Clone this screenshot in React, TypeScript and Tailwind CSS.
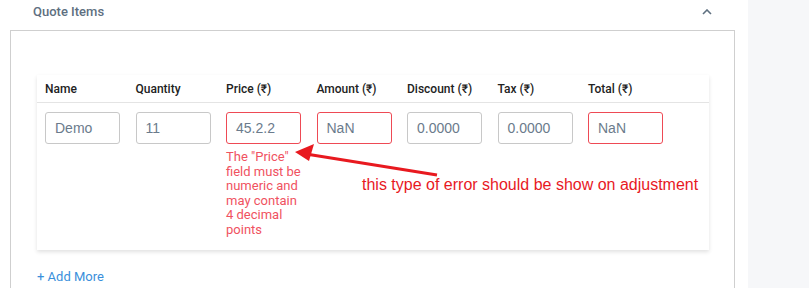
import React from 'react';

const columns = ['Name', 'Quantity', 'Price (₹)', 'Amount (₹)', 'Discount (₹)', 'Tax (₹)', 'Total (₹)'];

const values: { value: string; error?: boolean }[] = [
  { value: 'Demo' },
  { value: '11' },
  { value: '45.2.2', error: true },
  { value: 'NaN', error: true },
  { value: '0.0000' },
  { value: '0.0000' },
  { value: 'NaN', error: true },
];

const Field: React.FC<{ value: string; error?: boolean }> = ({ value, error }) => (
  <div
    className={`w-[75px] h-[32px] flex items-center pl-[9px] rounded-[3px] border text-[14px] text-[#6b7b8c] bg-white ${
      error ? 'border-[#ee4a55]' : 'border-[#c8c8c8]'
    }`}
    style={{ fontFamily: '"Liberation Sans", Arial, sans-serif' }}
  >
    {value}
  </div>
);

export default function App() {
  return (
    <div className="flex w-full h-[288px] overflow-hidden bg-white" style={{ fontFamily: 'Roboto, "Noto Sans", sans-serif' }}>
      <div className="w-[748px] shrink-0 pl-[10px] pr-[13px] relative">
        <div className="h-[30px] flex items-start justify-between pt-[4px] pl-[23px] pr-[23px]">
          <span className="text-[13px] leading-[16px] font-medium text-[#5e6f80]">Quote Items</span>
          <svg width="10" height="6" viewBox="0 0 10 6" className="text-[#5f7080] mt-[5px]">
            <path d="M1 5 L5 1 L9 5" fill="none" stroke="currentColor" strokeWidth="1.6" />
          </svg>
        </div>

        <div className="border border-[#cfcfcf] pt-[44px] pl-[26px] pr-[25px] h-[300px]">
          <div className="bg-white shadow-[0_2px_4px_rgba(0,0,0,0.12)] pb-[12px]">
            <div className="grid grid-cols-[repeat(7,90.5px)] pl-2 h-[28px] items-center border-b border-[#e4e4e4]">
              {columns.map(c => (
                <span key={c} className="text-[12px] font-medium text-[#222]">{c}</span>
              ))}
            </div>
            <div className="grid grid-cols-[repeat(7,90.5px)] pl-2 pt-[9px] items-start">
              {values.map((v, i) => (
                <div key={i}>
                  <Field value={v.value} error={v.error} />
                  {i === 2 && (
                    <p className="w-[80px] mt-[6px] text-[13px] leading-[14.6px] text-[#f0525f]">
                      The "Price" field must be numeric and may contain 4 decimal points
                    </p>
                  )}
                </div>
              ))}
            </div>
          </div>
          <div className="mt-[17px] text-[13px] text-[#3a8fdb]">+ Add More</div>
        </div>

        {/* annotation overlay */}
        <svg className="absolute left-0 top-0 pointer-events-none" width="748" height="288">
          <line x1="306" y1="154" x2="437" y2="175" stroke="#e8191f" strokeWidth="3" />
          <polygon points="295,152 314,144 309,161" fill="#e8191f" />
        </svg>
        <span
          className="absolute left-[362px] top-[173px] text-[16px] text-[#e8191f] whitespace-nowrap"
          style={{ fontFamily: '"Liberation Sans", Arial, sans-serif' }}
        >
          this type of error should be show on adjustment
        </span>
      </div>
      <div className="flex-1 bg-[#f6f7f9]" />
    </div>
  );
}
